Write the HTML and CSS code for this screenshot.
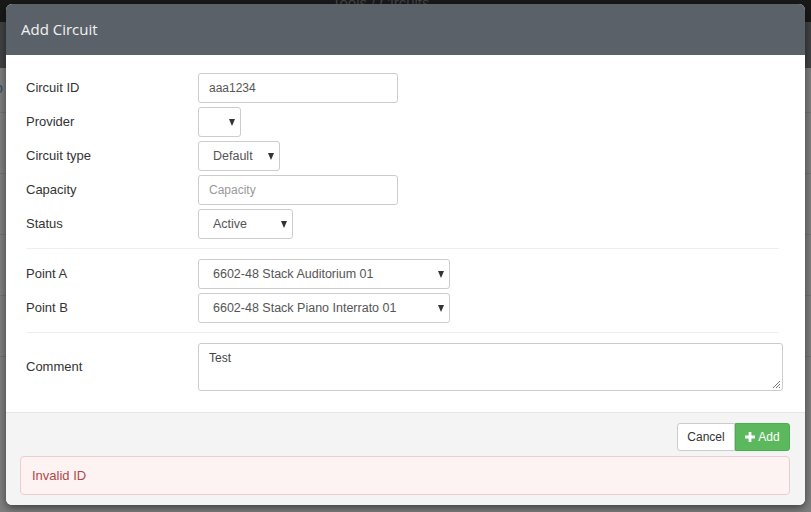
FILE: index.html
```html
<!DOCTYPE html>
<html>
<head>
<meta charset="utf-8">
<link rel="stylesheet" href="styles.css">
</head>
<body>
<div class="page">
  <div class="navbar"><span class="crumb">Tools / Circuits</span></div>
  <div class="subbar"></div>
  <div class="content">
    <div class="bgrow first"><span class="link">o</span></div>
    <div class="bgrow"></div>
    <div class="bgrow"></div>
    <div class="bgrow"></div>
    <div class="bgrow"></div>
  </div>
</div>

<div class="modal">
  <div class="modal-header">Add Circuit</div>
  <div class="modal-body">
    <div class="row">
      <label>Circuit ID</label>
      <div class="input w200">aaa1234</div>
    </div>
    <div class="row">
      <label>Provider</label>
      <div class="select w43"><span></span><i class="caret"></i></div>
    </div>
    <div class="row">
      <label>Circuit type</label>
      <div class="select w82"><span>Default</span><i class="caret"></i></div>
    </div>
    <div class="row">
      <label>Capacity</label>
      <div class="input w200 placeholder">Capacity</div>
    </div>
    <div class="row">
      <label>Status</label>
      <div class="select w95"><span>Active</span><i class="caret"></i></div>
    </div>
    <hr>
    <div class="row">
      <label>Point A</label>
      <div class="select w252"><span>6602-48 Stack Auditorium 01</span><i class="caret"></i></div>
    </div>
    <div class="row">
      <label>Point B</label>
      <div class="select w252"><span>6602-48 Stack Piano Interrato 01</span><i class="caret"></i></div>
    </div>
    <hr>
    <div class="row">
      <label>Comment</label>
      <div class="textarea">Test
        <svg class="grip" width="9" height="9" viewBox="0 0 9 9"><path d="M8 1L1 8M8 4L4 8M8 7L7 8" stroke="#777" stroke-width="1" fill="none"/></svg>
      </div>
    </div>
  </div>
  <div class="modal-footer">
    <div class="buttons">
      <button class="btn btn-default">Cancel</button>
      <button class="btn btn-success"><svg width="10" height="10" viewBox="0 0 10 10"><path d="M3.6 0h2.8v3.6H10v2.8H6.4V10H3.6V6.4H0V3.6h3.6z" fill="#fff"/></svg>Add</button>
    </div>
    <div class="alert">Invalid ID</div>
  </div>
</div>
</body>
</html>
```

FILE: styles.css
```css
html, body {
  margin: 0;
  padding: 0;
}
body {
  width: 811px;
  height: 512px;
  overflow: hidden;
  font-family: "Liberation Sans", Arial, sans-serif;
  background: #7f7f7f;
  position: relative;
}
.page {
  display: flex;
  flex-direction: column;
}
.navbar {
  height: 22px;
  background: #19191a;
  position: relative;
}
.crumb {
  display: block;
  padding: 0 0 0 332px;
  color: #444;
  font-size: 15px;
  line-height: 6px;
  height: 4px;
  overflow: hidden;
}
.subbar {
  height: 46px;
  background: #404244;
}
.content {
  display: flex;
  flex-direction: column;
}
.bgrow {
  height: 60px;
  border-bottom: 1px solid #737373;
}
.bgrow.first {
  height: 44px;
}
.link {
  display: block;
  color: #2a4f6e;
  font-size: 14px;
  padding-top: 12px;
  margin-left: -5px;
}

.modal {
  position: absolute;
  left: 6px;
  top: 4px;
  width: 799px;
  height: 501px;
  background: #fff;
  border-radius: 6px;
  overflow: hidden;
  box-shadow: 0 3px 9px rgba(0,0,0,.5);
  display: flex;
  flex-direction: column;
}
.modal-header {
  height: 51px;
  background: #5b6168;
  color: #f2f2f2;
  font-family: "Open Sans", sans-serif;
  font-size: 15px;
  line-height: 51px;
  padding-left: 15px;
  flex: none;
}
.modal-body {
  padding: 18px 22px 0 20px;
  height: 339px;
  flex: none;
  display: flex;
  flex-direction: column;
  gap: 4px;
}
.row {
  display: flex;
  align-items: center;
}
label {
  width: 172px;
  font-size: 13px;
  color: #333;
  flex: none;
  padding-bottom: 2px;
}
hr {
  border: 0;
  border-top: 1px solid #eee;
  margin: 5px 0 6px;
  width: 753px;
}
.input, .select, .textarea {
  box-sizing: border-box;
  height: 30px;
  border: 1px solid #ccc;
  border-radius: 3px;
  font-size: 12px;
  color: #555;
  padding: 0 10px;
  line-height: 28px;
  background: #fff;
}
.placeholder {
  color: #999;
}
.w200 { width: 200px; }
.w43 { width: 43px; }
.w82 { width: 82px; }
.w95 { width: 95px; }
.w252 { width: 252px; }
.select {
  display: flex;
  justify-content: space-between;
  align-items: center;
  padding: 0 5px 0 14px;
  font-size: 12.5px;
}
.caret {
  width: 0;
  height: 0;
  border-left: 3px solid transparent;
  border-right: 3px solid transparent;
  border-top: 7px solid #333;
}
.textarea {
  width: 585px;
  height: 48px;
  line-height: 16px;
  padding: 6px 10px;
  position: relative;
  color: #444;
}
.grip {
  position: absolute;
  right: 1px;
  bottom: 1px;
}
.modal-footer {
  flex: 1;
  background: #f4f4f4;
  border-top: 1px solid #e5e5e5;
  padding: 10px 15px 10px 14px;
  display: flex;
  flex-direction: column;
  gap: 5px;
}
.buttons {
  display: flex;
  justify-content: flex-end;
}
.btn {
  height: 28px;
  font-family: "Liberation Sans", Arial, sans-serif;
  font-size: 12px;
  border: 1px solid #ccc;
  padding: 0 9px;
  display: flex;
  align-items: center;
  gap: 3px;
  margin: 0;
}
.btn-default {
  background: #fff;
  color: #333;
  border-radius: 3px 0 0 3px;
  width: 58px;
  justify-content: center;
}
.btn-success {
  background: #5cb85c;
  border-color: #4cae4c;
  color: #fff;
  border-radius: 0 3px 3px 0;
  width: 55px;
  justify-content: center;
}
.alert {
  height: 39px;
  box-sizing: border-box;
  background: #fdf3f3;
  border: 1px solid #ebcdd1;
  border-radius: 4px;
  color: #b3464a;
  font-size: 13px;
  line-height: 37px;
  padding-left: 11px;
}
```
